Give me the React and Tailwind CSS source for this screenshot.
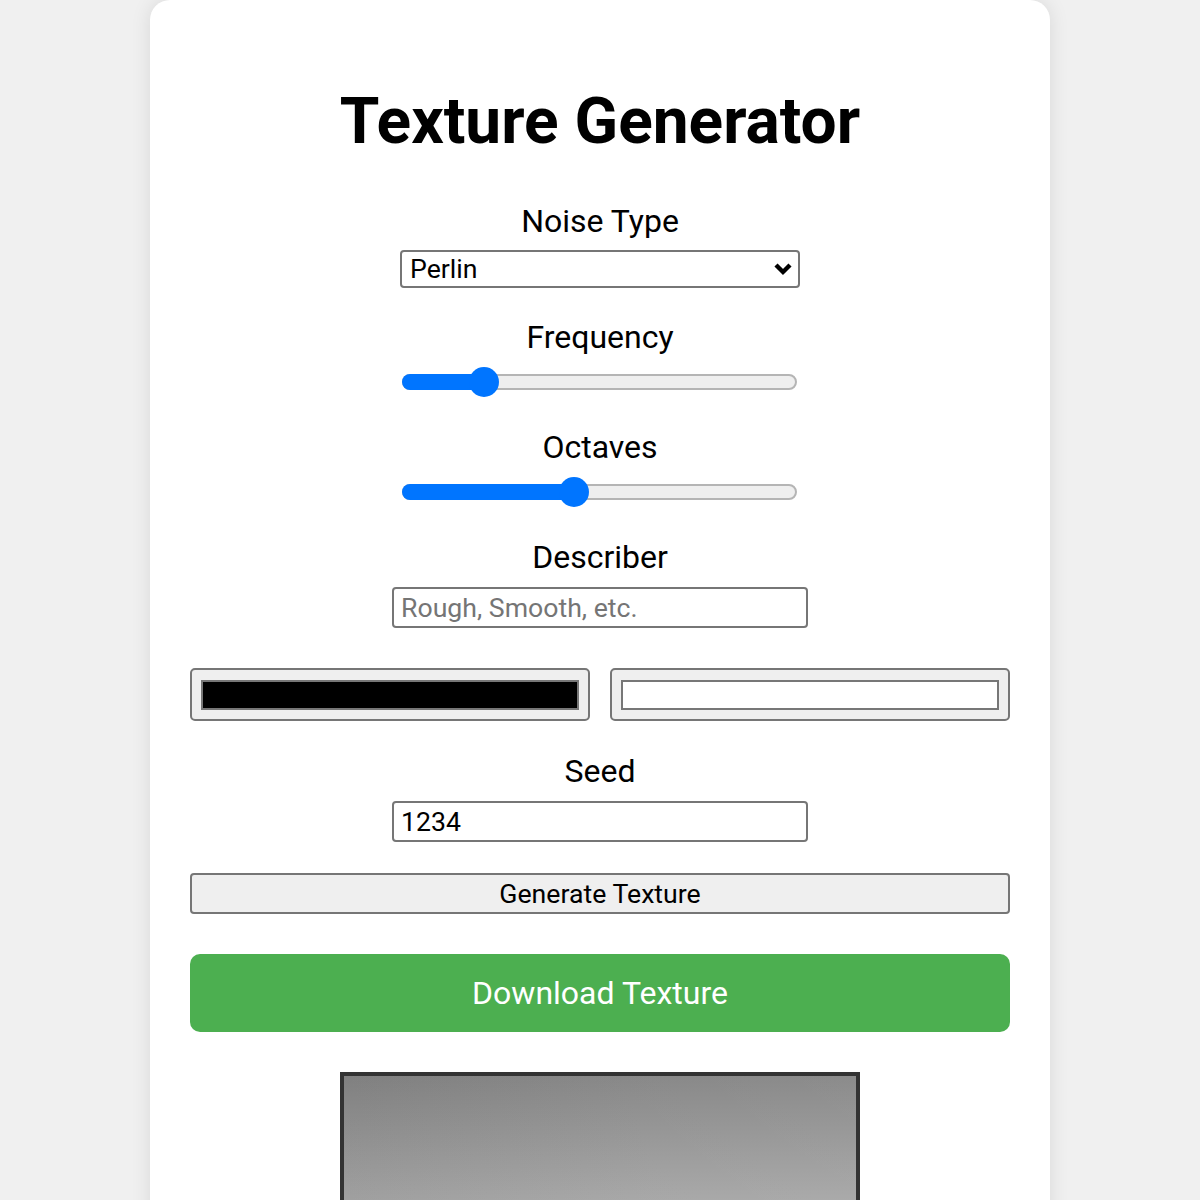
import { useState } from 'react';

// Slider drawn to match the 2x Chrome range look
function Slider({ percent }) {
  return (
    <div className="relative mx-auto mt-[10px] h-[32px] w-[400px]">
      <div className="absolute left-[2px] right-[3px] top-[8px] h-[16px] rounded-full border-2 border-[#b5b5b5] bg-[#efefef]" />
      <div
        className="absolute left-[2px] top-[8px] h-[16px] rounded-l-full bg-[#0075ff]"
        style={{ width: `${percent}%` }}
      />
      <div
        className="absolute top-[1px] h-[30px] w-[30px] -translate-x-1/2 rounded-full bg-[#0075ff]"
        style={{ left: `${percent}%` }}
      />
    </div>
  );
}

function Label({ children }) {
  return <label className="block text-center text-[32px] leading-[38px] text-black">{children}</label>;
}

function ColorBox({ color }) {
  return (
    <div className="flex h-[53px] flex-1 items-center rounded-[5px] border-2 border-[#767676] bg-[#efefef] px-[9px]">
      <div className="h-[30px] w-full border-2 border-[#777777]" style={{ background: color }} />
    </div>
  );
}

export default function App() {
  const [noise, setNoise] = useState('perlin');
  const [desc, setDesc] = useState('');
  const [seed, setSeed] = useState('1234');

  return (
    <div className="min-h-screen bg-[#f0f0f0] font-['Roboto',sans-serif]">
      <div className="mx-auto w-[900px] rounded-[20px] bg-white px-[40px] pb-[40px] pt-[40px] shadow-[0_0_20px_rgba(0,0,0,0.1)]">
        <h1 className="mb-[43px] mt-[44px] text-center text-[64px] font-bold leading-[75px] text-black">
          Texture Generator
        </h1>

        {/* noise type */}
        <div>
          <Label>Noise Type</Label>
          <div className="relative mx-auto mt-[10px] w-[400px]">
            <select
              value={noise}
              onChange={e => setNoise(e.target.value)}
              className="block h-[38px] w-full appearance-none rounded-[4px] border-2 border-[#767676] bg-white pl-[8px] text-[26.67px] leading-[34px] text-black outline-none"
            >
              <option value="perlin">Perlin</option>
              <option value="simplex">Simplex</option>
              <option value="worley">Worley</option>
            </select>
            <svg
              className="pointer-events-none absolute right-[7px] top-[12px]"
              width="20"
              height="14"
              viewBox="0 0 20 14"
            >
              <path d="M3 3 L10 10 L17 3" fill="none" stroke="black" strokeWidth="4.4" />
            </svg>
          </div>
        </div>

        <div className="mt-[30px]">
          <Label>Frequency</Label>
          <Slider percent={21} />
        </div>

        <div className="mt-[30px]">
          <Label>Octaves</Label>
          <Slider percent={43.5} />
        </div>

        <div className="mt-[30px]">
          <Label>Describer</Label>
          <input
            type="text"
            value={desc}
            onChange={e => setDesc(e.target.value)}
            placeholder="Rough, Smooth, etc."
            className="mx-auto mt-[11px] block h-[41px] w-[416px] rounded-[4px] border-2 border-[#767676] bg-white px-[7px] text-[26.67px] text-black outline-none placeholder:text-[#757575]"
          />
        </div>

        {/* colour pickers */}
        <div className="mt-[40px] flex gap-[20px]">
          <ColorBox color="#000000" />
          <ColorBox color="#ffffff" />
        </div>

        <div className="mt-[31px]">
          <Label>Seed</Label>
          <input
            type="text"
            value={seed}
            onChange={e => setSeed(e.target.value)}
            className="mx-auto mt-[11px] block h-[41px] w-[416px] rounded-[4px] border-2 border-[#767676] bg-white px-[7px] text-[26.67px] text-black outline-none"
          />
        </div>

        <button className="mt-[31px] block h-[41px] w-full rounded-[4px] border-2 border-[#767676] bg-[#efefef] text-[26.67px] leading-[36px] text-black">
          Generate Texture
        </button>

        <button className="mt-[40px] block h-[78px] w-full rounded-[10px] bg-[#4caf50] text-[32px] text-white">
          Download Texture
        </button>

        <div className="mx-auto mt-[40px] h-[520px] w-[520px] border-4 border-[#333333] bg-[linear-gradient(180deg,#848484_0%,#a6a6a6_25%,#b0b0b0_45%,#9a9a9a_70%,#8c8c8c_100%)]">
          <div className="h-full w-full bg-[linear-gradient(90deg,rgba(0,0,0,0.03)_0%,rgba(255,255,255,0.04)_60%,rgba(255,255,255,0.06)_100%)]" />
        </div>
      </div>
    </div>
  );
}
